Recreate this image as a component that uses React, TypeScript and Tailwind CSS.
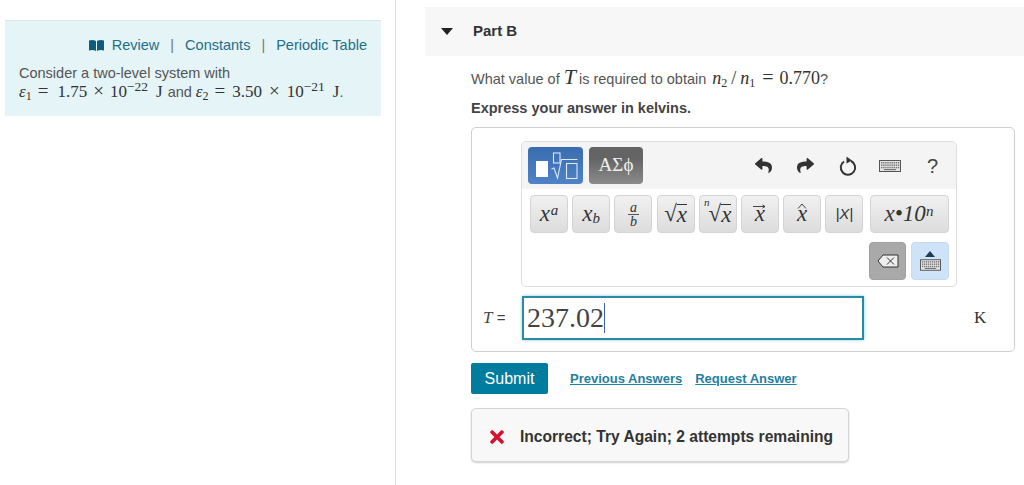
import React from "react";
import { FaReply, FaShare, FaTimes } from "react-icons/fa";

const serif = "font-['Liberation_Serif',serif]";

function Kb({ w = 22, h = 12 }: { w?: number; h?: number }) {
  const cells: React.ReactNode[] = [];
  for (let r = 0; r < 3; r++)
    for (let c = 0; c < 9; c++)
      cells.push(<rect key={r + "-" + c} x={2 + c * 2.1} y={2 + r * 2.4} width="1.4" height="1.5" fill="#777" />);
  return (
    <svg width={w} height={h} viewBox="0 0 22 12">
      <rect x="0.5" y="0.5" width="21" height="11" fill="#e6e6e6" stroke="#555" />
      {cells}
      <rect x="5" y="9" width="12" height="1.2" fill="#777" />
    </svg>
  );
}

function MBtn({ children, w = "w-[38px]" }: { children: React.ReactNode; w?: string }) {
  return (
    <div className={`${w} h-[38px] shrink-0 rounded-[4px] border border-[#d4d4d4] bg-gradient-to-b from-[#f1f1f1] to-[#dcdcdc] flex items-center justify-center italic text-[#333] ${serif}`}>
      {children}
    </div>
  );
}

function Toolbar() {
  return (
    <div className="w-[436px] h-[146px] rounded-[5px] border border-[#dedede] bg-white overflow-hidden">
      <div className="h-[47px] bg-[#f4f4f4] flex items-center pl-[6px]">
        <div className="w-[55px] h-[37px] rounded-[4px] bg-gradient-to-b from-[#3a6cb0] to-[#4f82c6] flex items-center pl-[8px] gap-[3px]">
          <div className="w-[12px] h-[16px] bg-white mt-[7px]" />
          <svg width="27" height="28" viewBox="0 0 27 28" fill="none" stroke="#dfe8f6" strokeWidth="1.1">
            <rect x="2.5" y="1" width="6.5" height="10" />
            <path d="M0.5 17 L3 16 L6.5 26 L10.5 7.5 H26.5" />
            <rect x="15.5" y="11.5" width="10.5" height="15" />
          </svg>
        </div>
        <div className={`ml-[6px] w-[54px] h-[37px] rounded-[4px] bg-gradient-to-b from-[#646464] from-30% to-[#8b8b8b] flex items-center justify-center text-[#eee] text-[19px] ${serif}`}>
          ΑΣϕ
        </div>
        <FaReply className="ml-[112px] text-[#333] text-[17px]" />
        <FaShare className="ml-[25px] text-[#333] text-[17px]" />
        <svg className="ml-[24px]" width="20" height="22" viewBox="0 0 20 22" fill="none" stroke="#333" strokeWidth="2">
          <path d="M6 6.5 A7.2 7.2 0 1 0 13 6" />
          <path d="M8.5 1.5 L14 5.5 L8.5 8.5 Z" fill="#333" stroke="none" />
        </svg>
        <div className="ml-[21px] flex"><Kb /></div>
        <span className="ml-[26px] text-[#444] text-[20px] font-['Liberation_Sans',sans-serif]">?</span>
      </div>
      <div className="flex pl-[8px] pt-[6px] gap-[4.2px]">
        <MBtn><span className="text-[23px]">x<sup className="text-[15px] -top-[6px] ml-[1px]">a</sup></span></MBtn>
        <MBtn><span className="text-[23px]">x<sub className="text-[15px] -bottom-[2px]">b</sub></span></MBtn>
        <MBtn>
          <span className="flex flex-col items-center text-[14px] leading-[13px]">
            <span>a</span>
            <span className="w-[11px] h-px bg-[#555]" />
            <span>b</span>
          </span>
        </MBtn>
        <MBtn>
          <span className="text-[23px] flex items-center not-italic">√<span className="italic border-t border-[#333] leading-[20px]">x</span></span>
        </MBtn>
        <MBtn>
          <span className="text-[23px] flex items-center not-italic">
            <span className="text-[11px] italic self-start leading-[11px] -mr-[1px]">n</span>
            <span>√</span>
            <span className="italic border-t border-[#333] leading-[20px]">x</span>
          </span>
        </MBtn>
        <MBtn>
          <span className="flex flex-col items-center">
            <svg className="-mb-[6px]" width="13" height="5" viewBox="0 0 13 5" fill="none" stroke="#333" strokeWidth="0.9"><path d="M0 2.5H12M9.5 0.8 12 2.5 9.5 4.2" /></svg>
            <span className="text-[23px] leading-[22px]">x</span>
          </span>
        </MBtn>
        <MBtn>
          <span className="flex flex-col items-center">
            <svg className="-mb-[6px]" width="10" height="6" viewBox="0 0 10 6" fill="none" stroke="#333" strokeWidth="0.9"><path d="M1 5.5 5 1 9 5.5" /></svg>
            <span className="text-[23px] leading-[22px]">x</span>
          </span>
        </MBtn>
        <MBtn><span className="text-[15px] font-['Liberation_Sans',sans-serif]">|X|</span></MBtn>
        <MBtn w="w-[79px] ml-[2px]"><span className="text-[23px] whitespace-nowrap">x•10<sup className="text-[15px] -top-[5px]">n</sup></span></MBtn>
      </div>
      <div className="flex justify-end pr-[7px] pt-[9px] gap-[5px]">
        <div className="w-[37px] h-[38px] rounded-[4px] bg-[#a9a9a9] border border-[#a0a0a0] flex items-center justify-center">
          <svg width="22" height="14" viewBox="0 0 22 14" fill="#eee" stroke="#333" strokeWidth="1">
            <path d="M6 1 H21 V13 H6 L1 7 Z" />
            <path d="M10 3.5 17 10.5 M17 3.5 10 10.5" fill="none" />
          </svg>
        </div>
        <div className="w-[38px] h-[38px] rounded-[4px] bg-[#cfe3f8] border border-[#c3daf2] flex flex-col items-center justify-center gap-[2px]">
          <svg width="10" height="6" viewBox="0 0 10 6"><path d="M5 0 10 6H0Z" fill="#1f3a52" /></svg>
          <Kb w={21} h={12} />
        </div>
      </div>
    </div>
  );
}

export default function App() {
  return (
    <div className="flex h-[485px] w-[1024px] overflow-hidden bg-white font-['Liberation_Sans',sans-serif]">
      <aside className="w-[396px] h-full shrink-0 border-r border-[#cfe0e8] pl-[5px] pt-[20px]">
        <div className="w-[376px] h-[96px] bg-[#e4f4f7] border-t border-[#d6e6ea] pl-[14px] pr-[14px]">
          <div className="flex items-center justify-end h-[49px] text-[14.5px] text-[#1f6f8a]">
            <svg className="mr-[8px]" width="15" height="11" viewBox="0 0 15 11" fill="#0d5d7a">
              <path d="M0 0.5 Q4 -0.5 7 1 V11 Q4 9.5 0 10.5 Z" />
              <path d="M15 0.5 Q11 -0.5 8 1 V11 Q11 9.5 15 10.5 Z" />
            </svg>
            <span>Review</span>
            <span className="mx-[11px] text-[#777]">|</span>
            <span>Constants</span>
            <span className="mx-[11px] text-[#777]">|</span>
            <span>Periodic Table</span>
          </div>
          <p className="text-[14.5px] leading-[16px] text-[#555] -mt-[5px]">Consider a two-level system with</p>
          <p className="text-[14.5px] leading-[20px] text-[#555] whitespace-nowrap flex items-baseline">
            <span className={`${serif} text-[17px] text-[#333] flex items-baseline`}>
              <i>ε</i><span className="text-[12px] translate-y-[3px]">1</span>
              <span className="ml-[6px] mr-[9px] text-[19px]">=</span>1.75<span className="ml-[6px] mr-[6px] text-[19px]">×</span>10<span className="text-[13.5px] -translate-y-[6px]">−22</span><span className="ml-[8px]">J</span>
            </span>
            <span className="ml-[5px] mr-[4px]">and</span>
            <span className={`${serif} text-[17px] text-[#333] flex items-baseline`}>
              <i>ε</i><span className="text-[12px] translate-y-[3px]">2</span>
              <span className="ml-[6px] mr-[7px] text-[19px]">=</span>3.50<span className="ml-[7px] mr-[7px] text-[19px]">×</span>10<span className="text-[13.5px] -translate-y-[6px]">−21</span><span className="ml-[8px]">J</span>
            </span>
            <span>.</span>
          </p>
        </div>
      </aside>
      <main className="flex-1 pl-[29px] pt-[7px]">
        <div className="h-[49px] bg-[#f7f7f7] flex items-center pl-[16px]">
          <svg width="12" height="7" viewBox="0 0 12 7"><path d="M0 0H12L6 7Z" fill="#222" /></svg>
          <span className="ml-[20px] text-[15px] font-bold text-[#333]">Part B</span>
        </div>
        <div className="pl-[46px]">
          <p className="mt-[10px] h-[22px] text-[14.5px] leading-[22px] text-[#555] whitespace-nowrap flex items-baseline">
            <span>What value of</span>
            <i className={`${serif} text-[22px] text-[#333] ml-[4px] mr-[3px]`}>T</i>
            <span>is required to obtain</span>
            <span className={`${serif} text-[18px] text-[#333] flex items-baseline ml-[6px]`}>
              <i>n</i><span className="text-[12px] translate-y-[3px]">2</span>
              <span className="mx-[4px]">/</span>
              <i>n</i><span className="text-[12px] translate-y-[3px]">1</span>
              <span className="ml-[7px] mr-[6px] text-[20px]">=</span>0.770
            </span>
            <span>?</span>
          </p>
          <p className="mt-[10px] text-[14.5px] leading-[20px] font-bold text-[#444]">Express your answer in kelvins.</p>
          <div className="mt-[9px] w-[544px] h-[225px] border border-[#cfcfcf] rounded-[5px] pt-[13px]">
            <div className="pl-[49px]"><Toolbar /></div>
            <div className="flex items-center mt-[9px] pl-[11px]">
              <span className="w-[39px] text-[15px] text-[#444] whitespace-nowrap"><i className={`${serif} text-[17px]`}>T</i> =</span>
              <div className={`w-[342px] h-[44px] border-2 border-[#2b8aa8] shadow-[0_0_3px_#8cc6d8] flex items-center pl-[3px] text-[28px] text-[#444] ${serif}`}>
                237.02<span className="w-px h-[30px] bg-[#3f5fa8]" />
              </div>
              <span className={`ml-[110px] text-[17px] text-[#333] ${serif}`}>K</span>
            </div>
          </div>
          <div className="flex items-center mt-[11px] h-[31px]">
            <div className="w-[77px] h-[31px] bg-[#007c9e] rounded-[2px] text-white text-[16px] flex items-center justify-center">Submit</div>
            <span className="ml-[22px] text-[13px] font-bold text-[#1f7f9f] underline">Previous Answers</span>
            <span className="ml-[13px] text-[13px] font-bold text-[#1f7f9f] underline">Request Answer</span>
          </div>
          <div className="mt-[14px] w-[378px] h-[54px] rounded-[5px] border border-[#d5d5d5] bg-[#f8f8f8] shadow-[0_1px_2px_rgba(0,0,0,0.2)] flex items-center pl-[15px] pt-[3px]">
            <FaTimes className="text-[#d4122e] text-[20px]" />
            <span className="ml-[13px] text-[15.6px] font-bold text-[#333] whitespace-nowrap">Incorrect; Try Again; 2 attempts remaining</span>
          </div>
        </div>
      </main>
    </div>
  );
}
